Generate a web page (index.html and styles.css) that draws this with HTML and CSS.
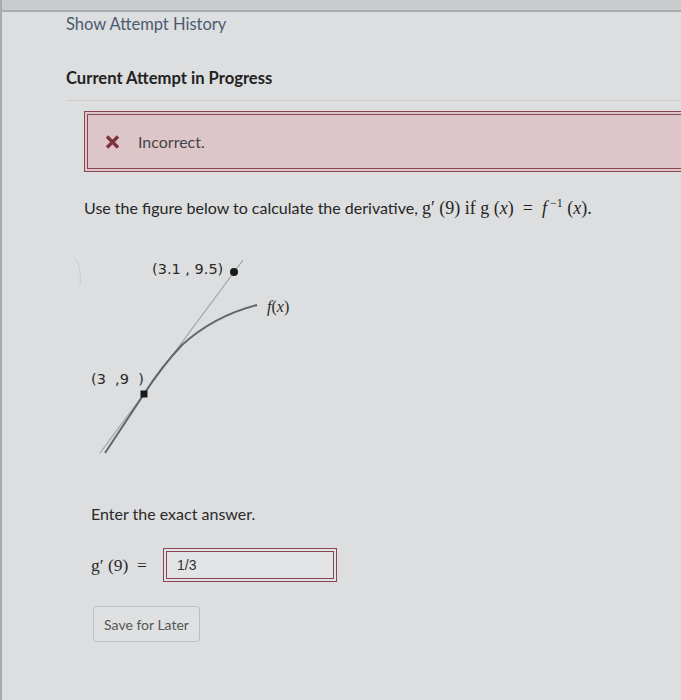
FILE: index.html
```html
<!DOCTYPE html>
<html>
<head>
<meta charset="utf-8">
<link rel="stylesheet" href="styles.css">
</head>
<body>
<div class="topbar"></div>
<main class="page">
  <a class="history">Show Attempt History</a>
  <h2 class="attempt">Current Attempt in Progress</h2>
  <div class="rule"></div>
  <div class="feedback">
    <svg class="xicon" width="15" height="14" viewBox="0 0 15 14"><path d="M2 1.5 L13 12.5 M13 1.5 L2 12.5" stroke="#7e3340" stroke-width="3.4" stroke-linecap="butt"/></svg>
    <span class="feedback-text">Incorrect.</span>
  </div>
  <p class="question">Use the figure below to calculate the derivative, <span class="m">g′ (9) if g (<i>x</i>) &nbsp;=&nbsp; <i>f</i><sup>−1</sup> (<i>x</i>).</span></p>
  <svg class="figure" width="280" height="230" viewBox="60 240 280 230">
    <path d="M73 258 Q80 268 78 284" stroke="#c9cbcc" stroke-width="1" fill="none"/>
    <line x1="98" y1="453" x2="241" y2="260" stroke="#9a9fa1" stroke-width="1.1"/>
    <path d="M103 453 L142 394 Q160 366 180 345 Q212 316 255 305" stroke="#5d686e" stroke-width="2" fill="none"/>
    <circle cx="232" cy="272" r="4" fill="#1a1a1a"/>
    <rect x="138.5" y="390.5" width="7" height="7" fill="#1a1a1a"/>
    <text x="150" y="274" class="lbl">(3.1 , 9.5)</text>
    <text x="89" y="384" class="lbl" xml:space="preserve">(3  ,9  )</text>
    <text x="265" y="312" class="fx"><tspan font-style="italic">f</tspan>(<tspan font-style="italic">x</tspan>)</text>
  </svg>
  <p class="enter">Enter the exact answer.</p>
  <div class="answer-row">
    <span class="m label">g′ (9) &nbsp;=</span>
    <div class="input">1/3</div>
  </div>
  <button class="save">Save for Later</button>
</main>
</body>
</html>
```
FILE: styles.css
```css
html, body {
  margin: 0;
  padding: 0;
}
body {
  background: #dcdedf;
  font-family: Lato, "Liberation Sans", sans-serif;
  color: #2b2b2b;
  width: 681px;
  height: 700px;
  overflow: hidden;
  border-left: 2px solid #a8abad;
  box-sizing: border-box;
}
.topbar {
  height: 10px;
  background: #c9cccd;
  border-bottom: 2px solid #a9acae;
}
.page {
  padding-left: 64px;
}
.history {
  display: block;
  margin-top: 2px;
  font-size: 16.5px;
  line-height: 20px;
  color: #4b5b72;
}
.attempt {
  margin: 34px 0 0;
  font-size: 16.6px;
  line-height: 20px;
  font-weight: 700;
  color: #222;
}
.rule {
  margin-top: 12px;
  height: 1px;
  background: #d8c9cc;
}
.feedback {
  margin: 10px 0 0 18px;
  height: 53px;
  border: 4px double #8a4552;
  border-right: none;
  background: #dcc6ca;
  display: flex;
  align-items: center;
  padding-left: 17px;
  gap: 18px;
}
.feedback-text {
  font-size: 16px;
  color: #444;
}
.question {
  margin: 26px 0 0 18px;
  font-size: 16px;
  line-height: 20px;
  color: #262626;
}
.m {
  font-family: "Liberation Serif", serif;
  font-size: 18px;
}
.m sup {
  font-size: 12px;
  line-height: 0;
  margin-left: 3px;
}
.figure {
  display: block;
  margin: 22px 0 0 -4px;
}
.lbl {
  font-family: "DejaVu Sans", sans-serif;
  font-size: 14.5px;
  fill: #2a2a2a;
}
.fx {
  font-family: "Liberation Serif", serif;
  font-size: 16px;
  fill: #2a2a2a;
}
.enter {
  margin: 34px 0 0 25px;
  font-size: 16px;
  line-height: 20px;
  color: #2a2a2a;
}
.answer-row {
  margin: 24px 0 0 25px;
  display: flex;
  align-items: center;
  gap: 16px;
}
.label {
  font-size: 17.5px;
}
.input {
  width: 156px;
  height: 26px;
  border: 4px double #8a4552;
  background: #e1e3e4;
  padding-left: 10px;
  font-family: "Liberation Sans", sans-serif;
  font-size: 14px;
  line-height: 26px;
  color: #333;
}
.save {
  display: block;
  margin: 24px 0 0 27px;
  width: 107px;
  height: 36px;
  border: 1px solid #bcbfc0;
  border-radius: 3px;
  background: #dee0e1;
  font-family: Lato, "Liberation Sans", sans-serif;
  font-size: 14px;
  color: #555;
  padding: 0;
}
```
